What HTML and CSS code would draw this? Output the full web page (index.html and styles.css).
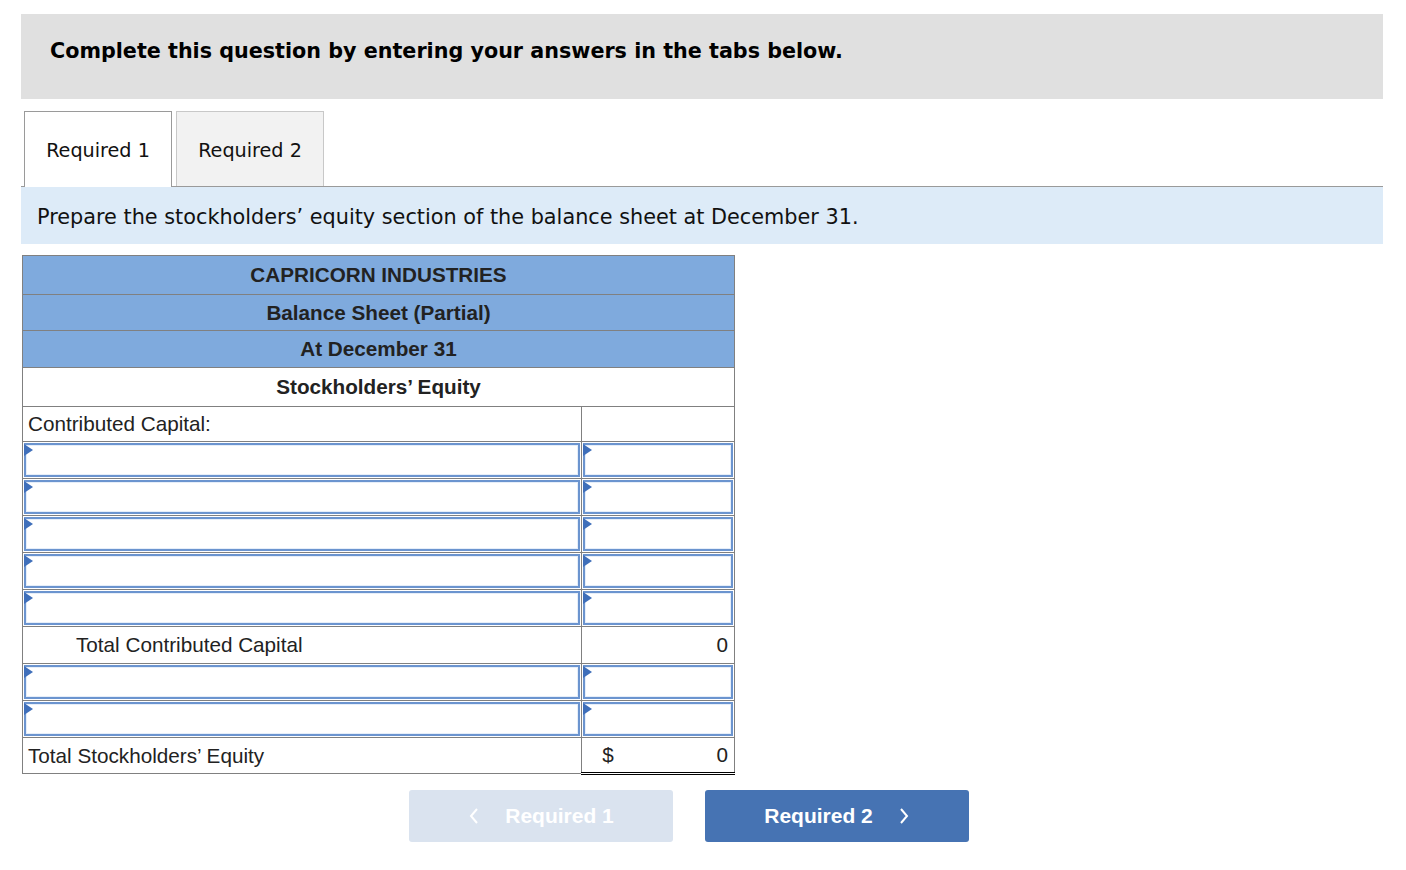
FILE: index.html
```html
<!DOCTYPE html>
<html>
<head>
<meta charset="utf-8">
<link rel="stylesheet" href="styles.css">
</head>
<body>
<div class="page">
  <div class="banner">Complete this question by entering your answers in the tabs below.</div>
  <div class="tabs">
    <div class="tab active">Required 1</div>
    <div class="tab">Required 2</div>
  </div>
  <div class="instr">Prepare the stockholders’ equity section of the balance sheet at December 31.</div>
  <table class="bs">
    <colgroup><col class="c1"><col class="c2"></colgroup>
    <tr class="hd h1"><td colspan="2">CAPRICORN INDUSTRIES</td></tr>
    <tr class="hd h2"><td colspan="2">Balance Sheet (Partial)</td></tr>
    <tr class="hd"><td colspan="2">At December 31</td></tr>
    <tr class="sub"><td colspan="2">Stockholders’ Equity</td></tr>
    <tr class="row cc"><td class="lbl">Contributed Capital:</td><td></td></tr>
    <tr class="row"><td class="in"><div class="box"></div><span class="tri"></span></td><td class="in"><div class="box"></div><span class="tri"></span></td></tr>
    <tr class="row"><td class="in"><div class="box"></div><span class="tri"></span></td><td class="in"><div class="box"></div><span class="tri"></span></td></tr>
    <tr class="row"><td class="in"><div class="box"></div><span class="tri"></span></td><td class="in"><div class="box"></div><span class="tri"></span></td></tr>
    <tr class="row"><td class="in"><div class="box"></div><span class="tri"></span></td><td class="in"><div class="box"></div><span class="tri"></span></td></tr>
    <tr class="row"><td class="in"><div class="box"></div><span class="tri"></span></td><td class="in"><div class="box"></div><span class="tri"></span></td></tr>
    <tr class="row"><td class="lbl indent">Total Contributed Capital</td><td class="num top">0</td></tr>
    <tr class="row"><td class="in"><div class="box"></div><span class="tri"></span></td><td class="in"><div class="box"></div><span class="tri"></span></td></tr>
    <tr class="row"><td class="in"><div class="box"></div><span class="tri"></span></td><td class="in"><div class="box"></div><span class="tri"></span></td></tr>
    <tr class="row last"><td class="lbl">Total Stockholders’ Equity</td><td class="num total"><span class="dollar">$</span><span>0</span></td></tr>
  </table>
  <div class="nav">
    <div class="btn disabled">
      <svg width="12" height="18" viewBox="0 0 12 18"><polyline points="9,2 3,9 9,16" fill="none" stroke="#fff" stroke-width="2"/></svg>
      <span>Required 1</span>
    </div>
    <div class="btn primary">
      <span>Required 2</span>
      <svg width="12" height="18" viewBox="0 0 12 18"><polyline points="3,2 9,9 3,16" fill="none" stroke="#fff" stroke-width="2"/></svg>
    </div>
  </div>
</div>
</body>
</html>
```
FILE: styles.css
```css
html, body { margin: 0; padding: 0; background: #fff; }
.page { padding: 14px 23px 0 21px; width: 1362px; }
.banner {
  background: #e0e0e0;
  height: 85px;
  box-sizing: border-box;
  padding: 24px 29px 0;
  font-family: "DejaVu Sans", Verdana, sans-serif;
  font-weight: bold;
  font-size: 20.7px;
  line-height: 26px;
  color: #000;
}
.tabs {
  display: flex;
  gap: 4px;
  padding-left: 3px;
  margin-top: 12px;
  border-bottom: 1px solid #9a9a9a;
}
.tab {
  width: 148px;
  height: 75px;
  box-sizing: border-box;
  border: 1px solid #c8c8c8;
  border-bottom: none;
  background: #f2f2f2;
  font-family: "DejaVu Sans", Verdana, sans-serif;
  font-size: 19.2px;
  color: #111;
  display: flex;
  align-items: center;
  justify-content: center;
  padding-top: 2px;
}
.tab.active {
  background: #fff;
  border-color: #9a9a9a;
  height: 76px;
  margin-bottom: -1px;
}
.instr {
  background: #ddebf8;
  height: 57px;
  box-sizing: border-box;
  padding: 17px 16px 0;
  font-family: "DejaVu Sans", Verdana, sans-serif;
  font-size: 20.8px;
  line-height: 26px;
  color: #111;
}
.bs {
  margin-top: 11px;
  margin-left: 1px;
  border-collapse: collapse;
  width: 713px;
  font-family: "Liberation Sans", Arial, sans-serif;
  font-size: 20.7px;
  color: #222;
}
.bs col.c1 { width: 560px; }
.bs col.c2 { width: 153px; }
.bs td { border: 1px solid #808080; padding: 0; height: 36px; }
.hd td { background: #7faadd; font-weight: bold; text-align: center; }
.h1 td { height: 38px; }
.h2 td { height: 35px; }
.sub td { font-weight: bold; text-align: center; height: 38px; }
.bs .cc td { height: 34px; }
.bs .last td { height: 34px; }
.lbl { padding-left: 5px !important; }
.lbl.indent { padding-left: 53px !important; }
.bs td.in { position: relative; padding: 1px; height: 34px; }
.box {
  height: 34px;
  box-sizing: border-box;
  border: 2px solid #6b94cf;
  box-shadow: inset 0 0 0 1px #e6eef9;
  background: #fff;
}
.tri {
  position: absolute;
  left: 1px;
  top: 2px;
  width: 0; height: 0;
  border-left: 9px solid #3f6fba;
  border-top: 6px solid transparent;
  border-bottom: 6px solid transparent;
}
.num { text-align: right; padding-right: 6px !important; }
.num.top { border-top: 1px solid #000 !important; }
.num.total {
  border-top: 1px solid #000 !important;
  border-bottom: 3px double #000 !important;
}
.dollar { float: left; padding-left: 20px; }
.nav {
  display: flex;
  gap: 32px;
  margin-top: 15px;
  margin-left: 388px;
}
.btn {
  width: 264px;
  height: 52px;
  border-radius: 3px;
  display: flex;
  align-items: center;
  justify-content: center;
  gap: 25px;
  font-family: "Liberation Sans", Arial, sans-serif;
  font-weight: bold;
  font-size: 21px;
  color: #fff;
}
.btn.disabled { background: #dae3ef; }
.btn.primary { background: #4673b3; }
```
